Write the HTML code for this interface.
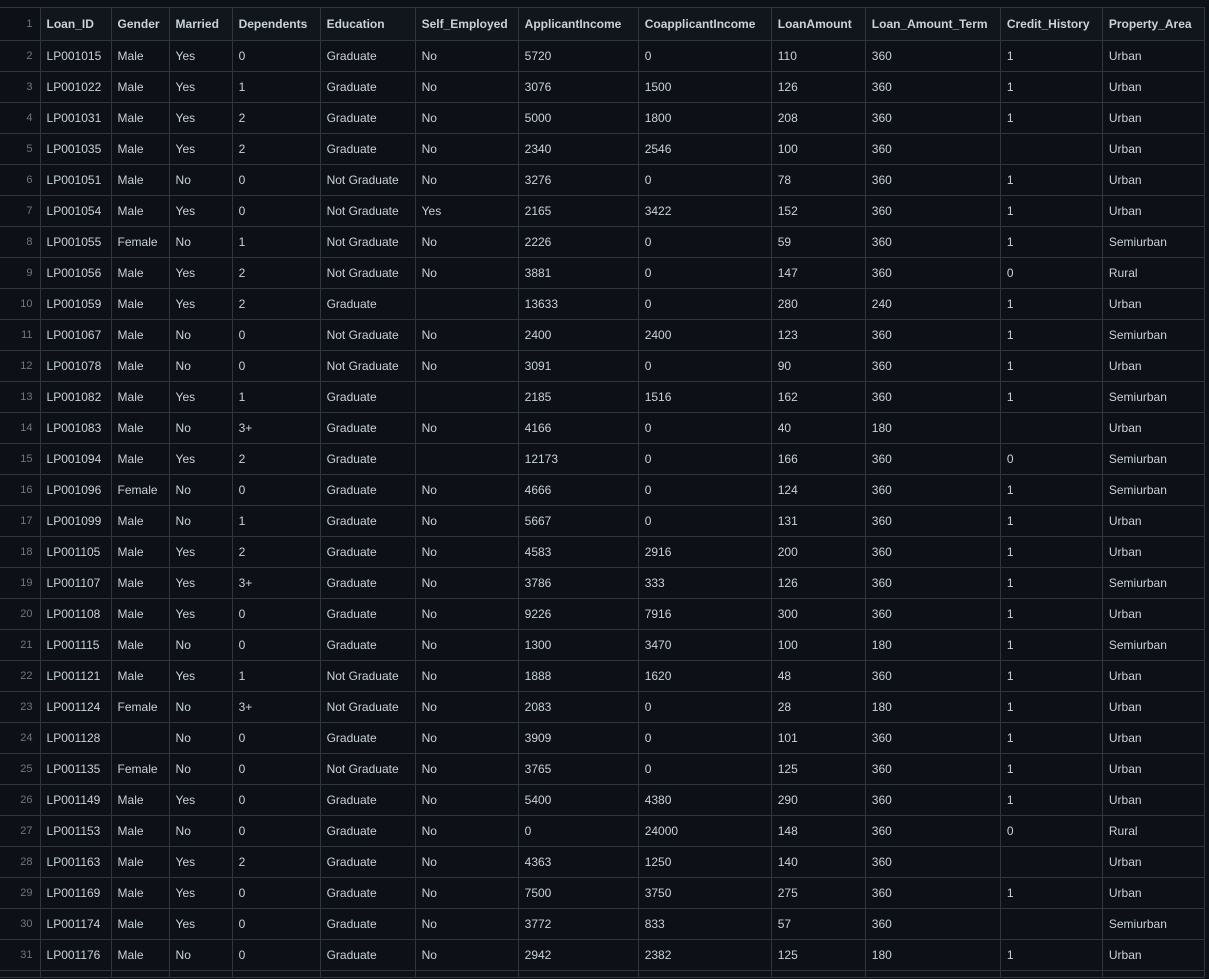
<!DOCTYPE html>
<html><head><meta charset="utf-8"><style>
html,body{margin:0;padding:0;background:#0d1117;width:1209px;height:979px;overflow:hidden}
.wrap{position:absolute;left:0;top:7px;width:1205px;height:970px;overflow:hidden;border-bottom:1px solid #30363d}
table{border-collapse:collapse;table-layout:fixed;font-family:"Liberation Sans",sans-serif;font-size:12px;color:#c9d1d9;width:1205px}
td,th{height:30px;padding:0 6px;text-align:left;border:1px solid #30363d;white-space:nowrap;overflow:hidden}
th{font-weight:bold;background:#11161d;height:32px}
td.n,th.n{border:none;border-top:1px solid #30363d;text-align:right;color:#6e7681;font-weight:normal;padding:0 7px 0 0;font-size:11px;background:#0d1117}
tr:first-child th{border-top:1px solid #30363d}
</style></head><body><div class="wrap"><table>
<colgroup><col style="width:40px"><col style="width:71px"><col style="width:58px"><col style="width:63px"><col style="width:88px"><col style="width:95px"><col style="width:103px"><col style="width:120px"><col style="width:133px"><col style="width:94px"><col style="width:135px"><col style="width:102px"><col style="width:102px"></colgroup>
<tr><th class="n">1</th><th>Loan_ID</th><th>Gender</th><th>Married</th><th>Dependents</th><th>Education</th><th>Self_Employed</th><th>ApplicantIncome</th><th>CoapplicantIncome</th><th>LoanAmount</th><th>Loan_Amount_Term</th><th>Credit_History</th><th>Property_Area</th></tr>
<tr><td class="n">2</td><td>LP001015</td><td>Male</td><td>Yes</td><td>0</td><td>Graduate</td><td>No</td><td>5720</td><td>0</td><td>110</td><td>360</td><td>1</td><td>Urban</td></tr>
<tr><td class="n">3</td><td>LP001022</td><td>Male</td><td>Yes</td><td>1</td><td>Graduate</td><td>No</td><td>3076</td><td>1500</td><td>126</td><td>360</td><td>1</td><td>Urban</td></tr>
<tr><td class="n">4</td><td>LP001031</td><td>Male</td><td>Yes</td><td>2</td><td>Graduate</td><td>No</td><td>5000</td><td>1800</td><td>208</td><td>360</td><td>1</td><td>Urban</td></tr>
<tr><td class="n">5</td><td>LP001035</td><td>Male</td><td>Yes</td><td>2</td><td>Graduate</td><td>No</td><td>2340</td><td>2546</td><td>100</td><td>360</td><td></td><td>Urban</td></tr>
<tr><td class="n">6</td><td>LP001051</td><td>Male</td><td>No</td><td>0</td><td>Not Graduate</td><td>No</td><td>3276</td><td>0</td><td>78</td><td>360</td><td>1</td><td>Urban</td></tr>
<tr><td class="n">7</td><td>LP001054</td><td>Male</td><td>Yes</td><td>0</td><td>Not Graduate</td><td>Yes</td><td>2165</td><td>3422</td><td>152</td><td>360</td><td>1</td><td>Urban</td></tr>
<tr><td class="n">8</td><td>LP001055</td><td>Female</td><td>No</td><td>1</td><td>Not Graduate</td><td>No</td><td>2226</td><td>0</td><td>59</td><td>360</td><td>1</td><td>Semiurban</td></tr>
<tr><td class="n">9</td><td>LP001056</td><td>Male</td><td>Yes</td><td>2</td><td>Not Graduate</td><td>No</td><td>3881</td><td>0</td><td>147</td><td>360</td><td>0</td><td>Rural</td></tr>
<tr><td class="n">10</td><td>LP001059</td><td>Male</td><td>Yes</td><td>2</td><td>Graduate</td><td></td><td>13633</td><td>0</td><td>280</td><td>240</td><td>1</td><td>Urban</td></tr>
<tr><td class="n">11</td><td>LP001067</td><td>Male</td><td>No</td><td>0</td><td>Not Graduate</td><td>No</td><td>2400</td><td>2400</td><td>123</td><td>360</td><td>1</td><td>Semiurban</td></tr>
<tr><td class="n">12</td><td>LP001078</td><td>Male</td><td>No</td><td>0</td><td>Not Graduate</td><td>No</td><td>3091</td><td>0</td><td>90</td><td>360</td><td>1</td><td>Urban</td></tr>
<tr><td class="n">13</td><td>LP001082</td><td>Male</td><td>Yes</td><td>1</td><td>Graduate</td><td></td><td>2185</td><td>1516</td><td>162</td><td>360</td><td>1</td><td>Semiurban</td></tr>
<tr><td class="n">14</td><td>LP001083</td><td>Male</td><td>No</td><td>3+</td><td>Graduate</td><td>No</td><td>4166</td><td>0</td><td>40</td><td>180</td><td></td><td>Urban</td></tr>
<tr><td class="n">15</td><td>LP001094</td><td>Male</td><td>Yes</td><td>2</td><td>Graduate</td><td></td><td>12173</td><td>0</td><td>166</td><td>360</td><td>0</td><td>Semiurban</td></tr>
<tr><td class="n">16</td><td>LP001096</td><td>Female</td><td>No</td><td>0</td><td>Graduate</td><td>No</td><td>4666</td><td>0</td><td>124</td><td>360</td><td>1</td><td>Semiurban</td></tr>
<tr><td class="n">17</td><td>LP001099</td><td>Male</td><td>No</td><td>1</td><td>Graduate</td><td>No</td><td>5667</td><td>0</td><td>131</td><td>360</td><td>1</td><td>Urban</td></tr>
<tr><td class="n">18</td><td>LP001105</td><td>Male</td><td>Yes</td><td>2</td><td>Graduate</td><td>No</td><td>4583</td><td>2916</td><td>200</td><td>360</td><td>1</td><td>Urban</td></tr>
<tr><td class="n">19</td><td>LP001107</td><td>Male</td><td>Yes</td><td>3+</td><td>Graduate</td><td>No</td><td>3786</td><td>333</td><td>126</td><td>360</td><td>1</td><td>Semiurban</td></tr>
<tr><td class="n">20</td><td>LP001108</td><td>Male</td><td>Yes</td><td>0</td><td>Graduate</td><td>No</td><td>9226</td><td>7916</td><td>300</td><td>360</td><td>1</td><td>Urban</td></tr>
<tr><td class="n">21</td><td>LP001115</td><td>Male</td><td>No</td><td>0</td><td>Graduate</td><td>No</td><td>1300</td><td>3470</td><td>100</td><td>180</td><td>1</td><td>Semiurban</td></tr>
<tr><td class="n">22</td><td>LP001121</td><td>Male</td><td>Yes</td><td>1</td><td>Not Graduate</td><td>No</td><td>1888</td><td>1620</td><td>48</td><td>360</td><td>1</td><td>Urban</td></tr>
<tr><td class="n">23</td><td>LP001124</td><td>Female</td><td>No</td><td>3+</td><td>Not Graduate</td><td>No</td><td>2083</td><td>0</td><td>28</td><td>180</td><td>1</td><td>Urban</td></tr>
<tr><td class="n">24</td><td>LP001128</td><td></td><td>No</td><td>0</td><td>Graduate</td><td>No</td><td>3909</td><td>0</td><td>101</td><td>360</td><td>1</td><td>Urban</td></tr>
<tr><td class="n">25</td><td>LP001135</td><td>Female</td><td>No</td><td>0</td><td>Not Graduate</td><td>No</td><td>3765</td><td>0</td><td>125</td><td>360</td><td>1</td><td>Urban</td></tr>
<tr><td class="n">26</td><td>LP001149</td><td>Male</td><td>Yes</td><td>0</td><td>Graduate</td><td>No</td><td>5400</td><td>4380</td><td>290</td><td>360</td><td>1</td><td>Urban</td></tr>
<tr><td class="n">27</td><td>LP001153</td><td>Male</td><td>No</td><td>0</td><td>Graduate</td><td>No</td><td>0</td><td>24000</td><td>148</td><td>360</td><td>0</td><td>Rural</td></tr>
<tr><td class="n">28</td><td>LP001163</td><td>Male</td><td>Yes</td><td>2</td><td>Graduate</td><td>No</td><td>4363</td><td>1250</td><td>140</td><td>360</td><td></td><td>Urban</td></tr>
<tr><td class="n">29</td><td>LP001169</td><td>Male</td><td>Yes</td><td>0</td><td>Graduate</td><td>No</td><td>7500</td><td>3750</td><td>275</td><td>360</td><td>1</td><td>Urban</td></tr>
<tr><td class="n">30</td><td>LP001174</td><td>Male</td><td>Yes</td><td>0</td><td>Graduate</td><td>No</td><td>3772</td><td>833</td><td>57</td><td>360</td><td></td><td>Semiurban</td></tr>
<tr><td class="n">31</td><td>LP001176</td><td>Male</td><td>No</td><td>0</td><td>Graduate</td><td>No</td><td>2942</td><td>2382</td><td>125</td><td>180</td><td>1</td><td>Urban</td></tr>
<tr><td class="n">32</td><td>LP001177</td><td>Female</td><td>No</td><td>0</td><td>Not Graduate</td><td>No</td><td>2478</td><td>0</td><td>75</td><td>360</td><td>1</td><td>Semiurban</td></tr>
</table></div></body></html>
